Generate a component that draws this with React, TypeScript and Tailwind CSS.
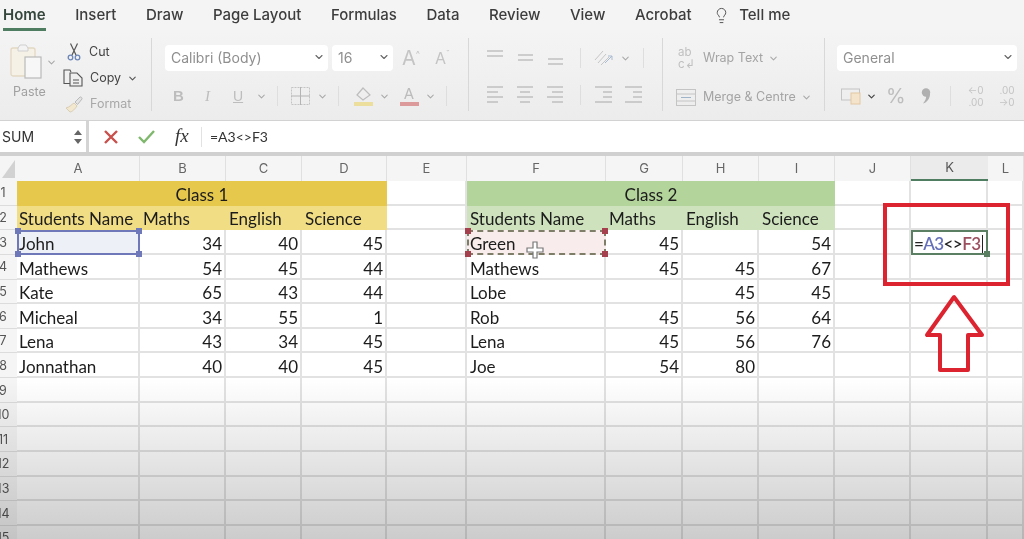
import { ChevronDown, Lightbulb } from "lucide-react";

const tabs = ["Home", "Insert", "Draw", "Page Layout", "Formulas", "Data", "Review", "View", "Acrobat"];
const columns = ["A", "B", "C", "D", "E", "F", "G", "H", "I", "J", "K", "L"];

const rows: (string | number | null)[][] = [
  ["John", 34, 40, 45, null, "Green", 45, null, 54],
  ["Mathews", 54, 45, 44, null, "Mathews", 45, 45, 67],
  ["Kate", 65, 43, 44, null, "Lobe", null, 45, 45],
  ["Micheal", 34, 55, 1, null, "Rob", 45, 56, 64],
  ["Lena", 43, 34, 45, null, "Lena", 45, 56, 76],
  ["Jonnathan", 40, 40, 45, null, "Joe", 54, 80, null],
];

const headers = ["Students Name", "Maths", "English", "Science"];

function Chev({ className = "" }: { className?: string }) {
  return <ChevronDown size={11} strokeWidth={2.2} className={`shrink-0 text-[#a8a8a8] ${className}`} />;
}

function Sep({ className = "" }: { className?: string }) {
  return <div className={`h-[20px] w-px shrink-0 bg-[#dedede] ${className}`} />;
}

function GroupSep() {
  return <div className="mt-[7px] h-[73px] w-px shrink-0 bg-[#d8d8d8]" />;
}

function LinesIcon({ widths, offset = 0 }: { widths: [number, number][]; offset?: number }) {
  return (
    <svg width="17" height="18" viewBox="0 0 17 18" className="shrink-0" stroke="#b4b4b4" strokeWidth="1.2">
      {widths.map(([x, w], i) => (
        <line key={i} x1={x} x2={x + w} y1={offset + i * 5 + 1} y2={offset + i * 5 + 1} />
      ))}
    </svg>
  );
}

function PasteIcon() {
  return (
    <svg width="34" height="38" viewBox="0 0 34 38" fill="none">
      <rect x="1" y="5" width="24" height="28" rx="2" fill="#f6f1e6" stroke="#e2d8c2" strokeWidth="1.3" />
      <path d="M8 5 L10 2 H16 L18 5 V8 H8 Z" fill="#f3f3f3" stroke="#cfcfcf" />
      <rect x="15" y="14" width="16" height="21" fill="#f7f7f7" stroke="#b9b9b9" strokeWidth="1.2" />
    </svg>
  );
}

function ScissorsIcon() {
  return (
    <svg width="14" height="18" viewBox="0 0 14 18" fill="none" className="ml-[4px] mr-[8px]">
      <path d="M3.5 0.5 L9 12 M10.5 0.5 L5 12" stroke="#555" strokeWidth="1.2" />
      <circle cx="3.5" cy="14.5" r="2.3" stroke="#6d86b8" strokeWidth="1.3" />
      <circle cx="10.5" cy="14.5" r="2.3" stroke="#6d86b8" strokeWidth="1.3" />
    </svg>
  );
}

function CopyIcon() {
  return (
    <svg width="20" height="18" viewBox="0 0 20 18" fill="none" stroke="#555" strokeWidth="1.1" className="mr-[7px]">
      <path d="M7 14.5 H1 V1 H7 L8 3" />
      <path d="M7 4 H14 L19 9 V17 H7 Z" />
      <path d="M10 11 H16 M10 14 H16" />
    </svg>
  );
}

function BrushIcon() {
  return (
    <svg width="18" height="17" viewBox="0 0 18 17" fill="none" className="ml-[2px] mr-[7px]">
      <path d="M1 12 C5 11 7 8 9 7 L12 10 C10 13 7 16 5 16 Z" fill="#f2e7cf" stroke="#d9cdb4" />
      <path d="M10 6 L15 1 C16 0.5 17.5 2 17 3 L12.5 8.5 Z" fill="#e4e4e4" stroke="#b9b9b9" />
    </svg>
  );
}

function Toolbar() {
  return (
    <div>
      <div className="flex h-[31px] items-start gap-[29.5px] bg-[#f4f4f5] pl-[3px] font-['Inter',sans-serif] text-[15px] font-medium leading-[30px] text-[#3d3d3d]">
        {tabs.map((tab, i) => (
          <div key={tab} className={i === 0 ? "h-[31px] border-b-[3px] border-[#4f7d62] font-semibold text-[#35463c]" : ""}>
            {tab}
          </div>
        ))}
        <div className="-ml-[8px] flex items-center gap-[9px]">
          <Lightbulb size={17} strokeWidth={1.4} className="text-[#555]" />
          <span>Tell me</span>
        </div>
      </div>

      <div className="flex h-[90px] border-b border-[#d2d2d2] bg-gradient-to-b from-[#f4f4f5] to-[#ececec] font-['Inter',sans-serif] text-[12.5px]">
        <div className="flex w-[151px] shrink-0 pl-[10px] pt-[12px]">
          <div className="w-[53px] shrink-0">
            <div className="flex items-center">
              <PasteIcon />
              <Chev className="ml-[2px]" />
            </div>
            <div className="mt-[2px] pl-[3px] text-[#a0a0a0]">Paste</div>
          </div>
          <div className="flex flex-col gap-[8px]">
            <div className="flex h-[18px] items-center text-[#444]">
              <ScissorsIcon />
              Cut
            </div>
            <div className="flex h-[18px] items-center text-[#444]">
              <CopyIcon />
              Copy
              <ChevronDown size={11} strokeWidth={2.4} className="ml-[6px] text-[#555]" />
            </div>
            <div className="flex h-[18px] items-center text-[#a8a8a8]">
              <BrushIcon />
              Format
            </div>
          </div>
        </div>
        <GroupSep />

        <div className="w-[316px] shrink-0 pl-[13px] pt-[14px]">
          <div className="flex items-center">
            <div className="flex h-[26px] w-[163px] items-center justify-between rounded-[4px] bg-white pb-[2px] pl-[6px] pr-[3px] text-[14px] text-[#8f8f8f]">
              Calibri (Body)
              <ChevronDown size={12} strokeWidth={2.2} className="text-[#666]" />
            </div>
            <div className="ml-[4px] flex h-[26px] w-[61px] items-center justify-between rounded-[4px] bg-white pb-[2px] pl-[6px] pr-[3px] text-[14px] text-[#8f8f8f]">
              16
              <ChevronDown size={12} strokeWidth={2.2} className="text-[#666]" />
            </div>
            <span className="ml-[9px] text-[20px] leading-none text-[#c4c4c4]">A</span>
            <span className="-mt-[10px] text-[9px] leading-none text-[#c4c4c4]">^</span>
            <span className="ml-[15px] text-[16px] leading-none text-[#c4c4c4]">A</span>
            <span className="-mt-[10px] text-[9px] leading-none text-[#c4c4c4]">ˇ</span>
          </div>
          <div className="mt-[14px] flex h-[22px] items-center">
            <span className="ml-[8px] w-[10px] font-['Liberation_Sans',sans-serif] text-[15px] font-bold text-[#bdbdbd]">B</span>
            <span className="ml-[22px] w-[8px] font-['Liberation_Serif',serif] text-[15px] italic text-[#bdbdbd]">I</span>
            <span className="ml-[20px] w-[10px] font-['Liberation_Sans',sans-serif] text-[14px] text-[#bdbdbd] underline">U</span>
            <Chev className="ml-[13px]" />
            <Sep className="ml-[10px]" />
            <svg width="19" height="18" viewBox="0 0 19 18" fill="none" stroke="#c4c4c4" className="ml-[13px]">
              <rect x="0.5" y="0.5" width="18" height="17" strokeDasharray="2 1" />
              <path d="M9.5 0 V18 M0 9 H19" stroke="#b4b4b4" />
            </svg>
            <Chev className="ml-[7px]" />
            <Sep className="ml-[10px]" />
            <svg width="19" height="20" viewBox="0 0 19 20" fill="none" className="ml-[15px]">
              <path d="M9 2 L16 9 L9 14 L3 9 Z" stroke="#bdbdbd" strokeWidth="1.2" />
              <rect x="0" y="16" width="19" height="4" fill="#ecdf9d" />
            </svg>
            <Chev className="ml-[6px]" />
            <div className="ml-[9px] flex w-[20px] flex-col items-center">
              <span className="text-[15px] leading-[15px] text-[#bbbbbb]">A</span>
              <div className="mt-[1px] h-[4px] w-[19px] bg-[#dc9a9a]" />
            </div>
            <Chev className="ml-[6px]" />
            <Sep className="ml-[10px]" />
          </div>
        </div>
        <GroupSep />

        <div className="w-[193px] shrink-0 pl-[18px] pt-[16px]">
          <div className="flex h-[22px] items-center">
            <LinesIcon widths={[[0, 16], [0, 16]]} offset={1} />
            <div className="ml-[13px]"><LinesIcon widths={[[1, 15], [1, 15]]} offset={5} /></div>
            <div className="ml-[13px]"><LinesIcon widths={[[1, 15], [1, 15]]} offset={9} /></div>
            <Sep className="ml-[16px]" />
            <svg width="20" height="18" viewBox="0 0 20 18" fill="none" stroke="#c6c6c6" className="ml-[13px]">
              <path d="M1 11 L9 2 M4 14 L12 5 M7 16 L15 8" />
              <path d="M11 14 L18 7 M18 7 H14 M18 7 V11" stroke="#a9bbd0" />
            </svg>
            <Chev className="ml-[6px]" />
            <Sep className="ml-[12px]" />
          </div>
          <div className="mt-[16px] flex h-[20px] items-center">
            <LinesIcon widths={[[0, 16], [0, 11], [0, 16], [0, 11]]} />
            <div className="ml-[13px]"><LinesIcon widths={[[0, 16], [3, 10], [0, 16], [3, 10]]} /></div>
            <div className="ml-[13px]"><LinesIcon widths={[[0, 16], [5, 11], [0, 16], [5, 11]]} /></div>
            <Sep className="ml-[16px]" />
            <div className="ml-[14px]"><LinesIcon widths={[[0, 17], [8, 9], [8, 9], [0, 17]]} /></div>
            <div className="ml-[13px]"><LinesIcon widths={[[0, 17], [8, 9], [8, 9], [0, 17]]} /></div>
          </div>
        </div>
        <GroupSep />

        <div className="w-[161px] shrink-0 pl-[13px] pt-[16px] text-[#a4a4a4]">
          <div className="flex h-[22px] items-center">
            <span className="ml-[2px] w-[18px] text-[11.5px] leading-[12px] text-[#c0c0c0]">ab<br />c↲</span>
            <span className="ml-[7px]">Wrap Text</span>
            <Chev className="ml-[5px]" />
          </div>
          <div className="mt-[18px] flex h-[20px] items-center">
            <svg width="20" height="17" viewBox="0 0 20 17" fill="none" stroke="#c4c4c4" className="shrink-0">
              <rect x="0.5" y="0.5" width="19" height="16" />
              <path d="M0 5 H20 M0 12 H20" />
              <path d="M5 8.5 H15" stroke="#9fb4c9" />
            </svg>
            <span className="ml-[7px] whitespace-nowrap">Merge &amp; Centre</span>
            <Chev className="ml-[5px]" />
          </div>
        </div>
        <GroupSep />

        <div className="flex-1 pl-[12px] pt-[14px]">
          <div className="flex h-[26px] w-[180px] items-center justify-between rounded-[4px] bg-white pb-[2px] pl-[6px] pr-[3px] text-[14px] text-[#8f8f8f]">
            General
            <ChevronDown size={12} strokeWidth={2.2} className="text-[#666]" />
          </div>
          <div className="mt-[14px] flex h-[22px] items-center">
            <svg width="20" height="17" viewBox="0 0 20 17" fill="none" className="ml-[4px] shrink-0">
              <rect x="0.5" y="1" width="18" height="11" stroke="#c4c4c4" />
              <rect x="10" y="5" width="9" height="11" fill="#f5e4cc" stroke="#e2c8a2" />
            </svg>
            <ChevronDown size={11} strokeWidth={2.6} className="ml-[5px] text-[#444]" />
            <span className="ml-[9px] text-[20px] leading-none text-[#bdbdbd]">%</span>
            <svg width="10" height="16" viewBox="0 0 10 16" fill="#b0b0b0" className="ml-[15px] shrink-0">
              <circle cx="5" cy="4.5" r="4.2" />
              <path d="M9 5 C9.5 10 6 14.5 2 15.5 C4.5 12.5 5.5 10 5 7 Z" />
            </svg>
            <Sep className="ml-[19px]" />
            <span className="ml-[13px] w-[20px] text-right text-[10px] leading-[12px] text-[#c4c4c4]">←0<br />.00</span>
            <span className="ml-[9px] w-[22px] text-right text-[10px] leading-[12px] text-[#c4c4c4]">.00<br />→0</span>
          </div>
        </div>
      </div>
    </div>
  );
}

function FormulaBar() {
  return (
    <div className="flex h-[35px] items-start border-b-[4px] border-[#d0d0d0] bg-white font-['Inter',sans-serif]">
      <div className="flex h-[31px] w-[89px] shrink-0 items-center justify-between border-r-[3px] border-[#d4d4d4] pl-[2px] pr-[4px] text-[14px] text-[#333]">
        SUM
        <svg width="8" height="16" viewBox="0 0 8 16" fill="#666">
          <path d="M4 1 L8 6 H0 Z M4 15 L0 10 H8 Z" />
        </svg>
      </div>
      <div className="flex h-[31px] flex-1 items-center pl-[15px]">
        <svg width="14" height="14" viewBox="0 0 14 14" stroke="#c9504c" strokeWidth="2.4">
          <path d="M1 1 L13 13 M13 1 L1 13" />
        </svg>
        <svg width="17" height="14" viewBox="0 0 17 14" fill="none" stroke="#7fb86c" strokeWidth="2.4" className="ml-[20px]">
          <path d="M1 7 L6 12 L16 1" />
        </svg>
        <span className="ml-[20px] w-[17px] font-['Liberation_Serif',serif] text-[19px] italic text-[#333]">fx</span>
        <div className="ml-[9px] h-[20px] w-px bg-[#e2e2e2]" />
        <span className="ml-[8px] font-['Lato',sans-serif] text-[14px] text-[#333]">=A3&lt;&gt;F3</span>
      </div>
    </div>
  );
}

function Handle({ className, color }: { className: string; color: string }) {
  return <div className={`absolute h-[6px] w-[6px] ${color} ${className}`} />;
}

function SelectedCell({ value }: { value: string }) {
  return (
    <div className="relative flex items-center bg-[#eef0f8] pl-[2px] pt-[2px]">
      {value}
      <div className="absolute inset-0 border-2 border-[#6f78b8]" />
      <Handle color="bg-[#6f78b8]" className="-left-[2px] -top-[2px]" />
      <Handle color="bg-[#6f78b8]" className="-right-[2px] -top-[2px]" />
      <Handle color="bg-[#6f78b8]" className="-bottom-[2px] -left-[2px]" />
      <Handle color="bg-[#6f78b8]" className="-bottom-[2px] -right-[2px]" />
    </div>
  );
}

function CopiedCell({ value }: { value: string }) {
  return (
    <div className="relative flex items-center bg-[#f8ecec] pl-[3px] pt-[2px]">
      {value}
      <div className="absolute inset-0 border-2 border-dashed border-[#7d7d68]" />
      <Handle color="bg-[#a5414f]" className="-left-[2px] -top-[2px]" />
      <Handle color="bg-[#a5414f]" className="-right-[2px] -top-[2px]" />
      <Handle color="bg-[#a5414f]" className="-bottom-[2px] -left-[2px]" />
      <Handle color="bg-[#a5414f]" className="-bottom-[2px] -right-[2px]" />
      <svg width="18" height="18" viewBox="0 0 18 18" className="absolute left-[59px] top-[11px]">
        <path d="M7 1 H11 V7 H17 V11 H11 V17 H7 V11 H1 V7 H7 Z" fill="#ffffff" stroke="#777" strokeWidth="1.2" />
      </svg>
    </div>
  );
}

function FormulaCell() {
  return (
    <div className="relative flex items-center whitespace-nowrap pl-[3px] pt-[2px] text-[17px] font-semibold tracking-[-0.6px]">
      <span className="text-[#222]">=</span>
      <span className="text-[#6570b8]">A3</span>
      <span className="text-[#222]">&lt;&gt;</span>
      <span className="text-[#9b4f5f]">F3</span>
      <span className="ml-[2px] h-[18px] w-px bg-[#222]" />
      <div className="absolute inset-0 border-2 border-[#5b7f62]" />
      <div className="absolute -bottom-[2px] -right-[2px] h-[6px] w-[6px] bg-[#5b7f62]" />
    </div>
  );
}

function RowNumber({ n }: { n: number }) {
  return (
    <div className="flex items-center overflow-hidden border-b border-[#dcdcdc] bg-[#f5f5f5] pt-[2px] font-['Inter',sans-serif] text-[12.5px] text-[#555]">
      <span className="-ml-[5px] w-[16px] text-center">{n}</span>
    </div>
  );
}

const cellLine = "border-b-2 border-r-2 border-[#e2e2e2]";

function Sheet() {
  return (
    <div className="relative h-[383px] overflow-hidden bg-white font-['Lato',sans-serif] text-[17px] text-[#1c1c1c]">
      <div className="grid grid-cols-[17px_123px_86px_76px_85px_80px_139px_77px_76px_76px_76px_77px_36px] grid-rows-[25px] auto-rows-[24.65px]">
        <div className="flex items-center justify-center bg-[#f5f5f5]">
          <svg width="13" height="18" viewBox="0 0 13 18" fill="#d2d2d2">
            <path d="M13 0 V18 H0 Z" />
          </svg>
        </div>
        {columns.map((c) => (
          <div
            key={c}
            className={
              c === "K"
                ? "flex items-center justify-center border-b-2 border-[#4f7d62] bg-[#ebebeb] font-['Inter',sans-serif] text-[13px] text-[#555]"
                : "flex items-center justify-center border-r border-[#e0e0e0] bg-[#f5f5f5] font-['Inter',sans-serif] text-[13px] text-[#666]"
            }
          >
            {c}
          </div>
        ))}

        <RowNumber n={1} />
        <div className="col-span-4 flex items-center justify-center bg-[#e5c84c] pt-[2px]">Class 1</div>
        <div className={cellLine} />
        <div className="col-span-4 flex items-center justify-center bg-[#b3d49b] pt-[2px]">Class 2</div>
        <div className={cellLine} />
        <div className={cellLine} />
        <div className={cellLine} />

        <RowNumber n={2} />
        {headers.map((h, i) => (
          <div key={h} className={`flex items-center whitespace-nowrap bg-[#f1dd84] pt-[2px] ${i === 0 ? "pl-[2px]" : "pl-[3px]"}`}>
            {h}
          </div>
        ))}
        <div className={cellLine} />
        {headers.map((h) => (
          <div key={h} className="flex items-center whitespace-nowrap bg-[#cee3bd] pl-[3px] pt-[2px]">
            {h}
          </div>
        ))}
        <div className={cellLine} />
        <div className={cellLine} />
        <div className={cellLine} />

        {rows.map((row, r) => (
          <RowCells key={r} row={row} r={r} />
        ))}

        {[9, 10, 11, 12, 13, 14, 15, 16].map((n) => (
          <EmptyRow key={n} n={n} />
        ))}
      </div>

      {/* fade toward the bottom of the frame */}
      <div className="pointer-events-none absolute inset-x-0 bottom-0 h-[161px] bg-gradient-to-b from-black/0 to-black/20" />

      {/* annotation drawn over the sheet */}
      <div className="pointer-events-none absolute left-[883px] top-[47px] h-[83px] w-[127px] border-[4px] border-[#dc2430]" />
      <svg width="62" height="80" viewBox="0 0 62 80" fill="none" className="pointer-events-none absolute left-[923px] top-[137px]">
        <path d="M31 4 L4 42 H17 V77 H45 V42 H59 Z" stroke="#dc2430" strokeWidth="4" strokeLinejoin="round" />
      </svg>
    </div>
  );
}

function RowCells({ row, r }: { row: (string | number | null)[]; r: number }) {
  return (
    <>
      <RowNumber n={r + 3} />
      {row.map((v, c) => {
        if (r === 0 && c === 0) return <SelectedCell key={c} value={String(v)} />;
        if (r === 0 && c === 5) return <CopiedCell key={c} value={String(v)} />;
        if (typeof v === "number") {
          return (
            <div key={c} className={`flex items-center justify-end pr-[2px] pt-[4px] ${cellLine}`}>
              {v}
            </div>
          );
        }
        return (
          <div key={c} className={`flex items-center pt-[4px] ${c === 0 ? "pl-[2px]" : "pl-[3px]"} ${cellLine}`}>
            {v}
          </div>
        );
      })}
      <div className={cellLine} />
      {r === 0 ? <FormulaCell /> : <div className={cellLine} />}
      <div className={cellLine} />
    </>
  );
}

function EmptyRow({ n }: { n: number }) {
  return (
    <>
      <RowNumber n={n} />
      {columns.map((c) => (
        <div key={c} className={cellLine} />
      ))}
    </>
  );
}

export default function App() {
  return (
    <div className="h-[539px] w-[1024px] overflow-hidden bg-white blur-[0.4px]">
      <Toolbar />
      <FormulaBar />
      <Sheet />
    </div>
  );
}
